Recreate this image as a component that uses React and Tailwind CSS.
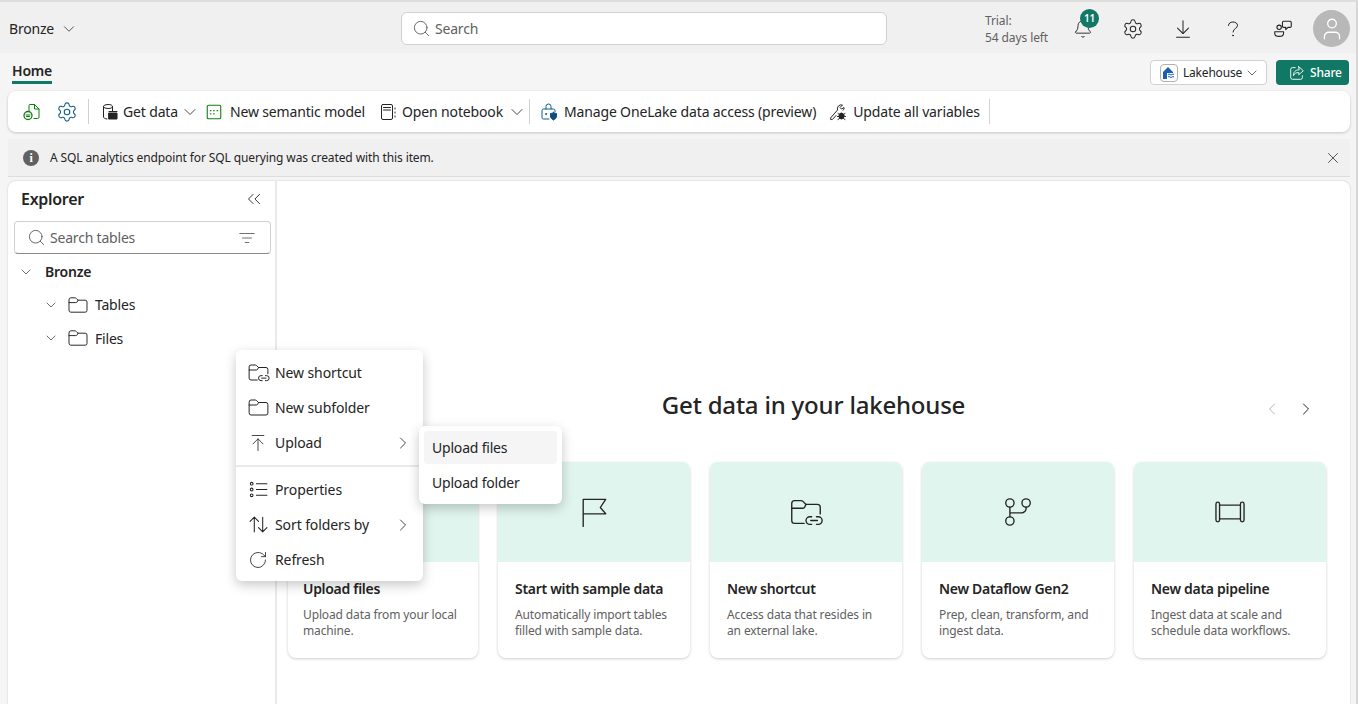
import { Search, ChevronDown, ChevronRight, ChevronLeft, ChevronsLeft, Bell, ArrowDownToLine, X, ArrowUpToLine, RotateCw, Settings, User } from 'lucide-react';

const Svg = ({ size = 20, className = '', children }) => (
  <svg width={size} height={size} viewBox="0 0 20 20" fill="none" stroke="currentColor" strokeWidth="1" strokeLinecap="round" strokeLinejoin="round" className={`shrink-0 ${className}`}>
    {children}
  </svg>
);

const FolderIcon = ({ size, className, sw = 0.8 }) => (
  <Svg size={size} className={className}>
    <g strokeWidth={sw}>
      <path d="M2.500 5.500A1.500 1.500 0 0 1 4 4h3.400c.4 0 .8.2 1 .4L10 6h6a1.500 1.500 0 0 1 1.500 1.500v7A1.500 1.500 0 0 1 16 16H4a1.500 1.500 0 0 1-1.500-1.500z" />
      <path d="M2.500 8h5.700c.4 0 .8-.2 1-.4L10 6" />
    </g>
  </Svg>
);

const ShortcutIcon = ({ size, className, sw = 0.8 }) => (
  <Svg size={size} className={className}>
    <g strokeWidth={sw}>
      <path d="M9 16H4a1.500 1.500 0 0 1-1.500-1.500v-9A1.500 1.500 0 0 1 4 4h3.400c.4 0 .8.2 1 .4L10 6h6a1.500 1.500 0 0 1 1.500 1.500V11" />
      <path d="M2.500 8h5.700c.4 0 .8-.2 1-.4L10 6" />
      <path d="M13 12.500h-1a2 2 0 0 0 0 4h1M15.500 12.500h1a2 2 0 0 1 0 4h-1M12.500 14.500h3.500" />
    </g>
  </Svg>
);

const LakehouseIcon = () => (
  <span className="flex h-[18px] w-[18px] shrink-0 items-center justify-center rounded-sm border border-[#b0b0b0] bg-white">
    <svg width="14" height="14" viewBox="0 0 14 14">
      <path d="M1 13V6l5-5 5 5v1H5v6z" fill="#1a5fb4" />
      <path d="M6 8.500q1-1 2 0t2 0 2 0M6 11q1-1 2 0t2 0 2 0" fill="none" stroke="#1a5fb4" strokeWidth="1" />
    </svg>
  </span>
);

function TopBar() {
  return (
    <header className="box-border flex h-[51px] items-center bg-[#f0f0f0] pt-[2px] text-[#242424]">
      <div className="flex w-[401px] items-center pl-[9px] text-[14px]">
        Bronze
        <ChevronDown size={18} strokeWidth={1} className="ml-[6px]" />
      </div>
      <div className="flex h-[33px] w-[486px] items-center rounded-md border border-[#d1d1d1] bg-white pl-[10px] text-[14px] text-[#616161]">
        <Search size={19} strokeWidth={1.2} className="mr-[4px]" />
        Search
      </div>
      <div className="ml-[98px] w-[83px] text-[12px] leading-[17px] tracking-[-0.1px] text-[#616161]">
        <div>Trial:</div>
        <div>54 days left</div>
      </div>
      <div className="relative ml-[5px] flex w-[20px] justify-center">
        <Bell size={20} strokeWidth={1.1} />
        <span className="absolute -top-[10px] left-[7px] flex h-[19px] w-[19px] items-center justify-center rounded-full bg-[#117865] text-[10px] font-semibold text-white">11</span>
      </div>
      <Settings size={22} strokeWidth={1.1} className="ml-[29px]" />
      <ArrowDownToLine size={22} strokeWidth={1.1} className="ml-[28px]" />
      <Svg size={20} className="ml-[29px]">
        <path d="M5.500 6.500C5.500 4.200 7.500 3 10 3s4.500 1.300 4.500 3.500c0 3-4.500 3-4.500 6.500" />
        <circle cx="10" cy="16.500" r=".5" />
      </Svg>
      <Svg size={22} className="ml-[29px]">
        <circle cx="6.500" cy="8.500" r="2" />
        <path d="M2.500 12.500h8v1.500c0 1.600-1.800 2.700-4 2.700s-4-1.100-4-2.700z" />
        <path d="M10.500 3h6a1 1 0 0 1 1 1v3.500a1 1 0 0 1-1 1h-2L12.500 10.500V8.500h-2a1 1 0 0 1-1-1V4a1 1 0 0 1 1-1z" />
      </Svg>
      <span className="ml-[19px] flex h-[37px] w-[37px] items-center justify-center rounded-full bg-[#b8b8b8] text-white">
        <User size={26} strokeWidth={1.2} />
      </span>
    </header>
  );
}

function TabRow() {
  return (
    <div className="flex h-[38px] items-start">
      <div className="ml-[12px] mt-[9px] border-b-[3px] border-[#117865] pb-[1px] text-[14px] font-semibold leading-[18px] text-[#242424]">Home</div>
      <div className="ml-auto mr-[7px] mt-[7px] flex items-center gap-[9px]">
        <div className="flex h-[25px] w-[117px] items-center rounded border border-[#d1d1d1] bg-white pl-[9px] text-[12px] text-[#242424]">
          <LakehouseIcon />
          <span className="ml-[5px]">Lakehouse</span>
          <ChevronDown size={16} strokeWidth={1} className="ml-[2px]" />
        </div>
        <div className="flex h-[25px] w-[73px] items-center rounded bg-[#117865] pl-[12px] text-[12px] font-medium text-white">
          <Svg size={18}>
            <path d="M8 4H5a2 2 0 0 0-2 2v9a2 2 0 0 0 2 2h9a2 2 0 0 0 2-2v-2" />
            <path d="M12 3l5 4.500-5 4.500V9.500c-3 0-5 1-6 3.500 0-4 2-6.500 6-6.500z" />
          </Svg>
          <span className="ml-[4px]">Share</span>
        </div>
      </div>
    </div>
  );
}

function Divider({ className = '' }) {
  return <span className={`h-[25px] w-px shrink-0 bg-[#d1d1d1] ${className}`} />;
}

function Toolbar() {
  return (
    <div className="ml-[8px] mr-[6px] flex h-[41px] items-center rounded-lg bg-white pl-[14px] text-[14px] tracking-[-0.15px] text-[#242424] shadow-[0_1px_3px_rgba(0,0,0,0.2)]">
      <Svg size={20} className="text-[#107c10]">
        <path d="M7 9V3.500A1 1 0 0 1 8 2.500h4.500L17 7v8a1.500 1.500 0 0 1-1.500 1.500H12" />
        <path d="M12.500 2.500V7H17" />
        <circle cx="6" cy="13.500" r="4" strokeWidth="1.300" />
        <path d="M4 13h4M4.500 14.500h3" strokeWidth="1" />
      </Svg>
      <Settings size={22} strokeWidth={1.2} className="ml-[14px] text-[#0f5c8f]" />
      <Divider className="ml-[10px]" />
      <Svg size={20} className="ml-[11px]">
        <ellipse cx="8" cy="4.500" rx="4.500" ry="2" />
        <path d="M3.500 4.500V15c0 1 1.500 1.800 3.500 2M12.500 4.500V9" />
        <rect x="9" y="11" width="8" height="6" fill="currentColor" />
        <path d="M9 9.500h8" />
      </Svg>
      <span className="ml-[3px]">Get data</span>
      <ChevronDown size={20} strokeWidth={1} className="ml-[2px]" />
      <Svg size={18} className="ml-[5px] text-[#107c10]">
        <rect x="2.500" y="2.500" width="15" height="15" rx="1.500" strokeWidth="1.200" />
        <path d="M6 8.500h.5M9.700 8.500h.5M13.500 8.500h.5M6 12h.5M9.700 12h.5" strokeWidth="1.500" />
      </Svg>
      <span className="ml-[7px]">New semantic model</span>
      <Svg size={20} className="ml-[13px]">
        <rect x="3.500" y="2.500" width="11" height="15" rx="1.500" />
        <path d="M5.500 5.500h7M5.500 8h7M17 6v1M17 10v1M17 14v1" />
      </Svg>
      <span className="ml-[4px]">Open notebook</span>
      <ChevronDown size={20} strokeWidth={1} className="ml-[4px]" />
      <Divider className="ml-[2px]" />
      <Svg size={20} className="ml-[9px] text-[#0f5c8f]">
        <path d="M7 7V4.500a2.500 2.500 0 0 1 5 0V7" />
        <path d="M10 17H4.500A1.500 1.500 0 0 1 3 15.500v-7A1.500 1.500 0 0 1 4.500 7h10A1.500 1.500 0 0 1 16 8.500V10" />
        <circle cx="7" cy="12" r=".6" />
        <path d="M14.500 10.500c1 .8 2 1 3 1v2.500c0 2-1.300 3.200-3 4-1.700-.8-3-2-3-4v-2.500c1 0 2-.2 3-1z" fill="#0f4c81" stroke="#0f4c81" />
      </Svg>
      <span className="ml-[5px]">Manage OneLake data access (preview)</span>
      <Svg size={20} className="ml-[12px]">
        <path d="M3 17.500l-.5-1.500 7-8a4 4 0 0 1 5-5l-2.500 2.500 1.500 1.500 2.500-1.500c.3 1-.2 2-.8 2.700" />
        <path d="M3 17.500c1 .3 1.500 0 2-.6l3-3.400" />
        <ellipse cx="13.500" cy="14" rx="2.500" ry="3" fill="currentColor" />
        <path d="M10 11.500l1.500 1M17 11.500l-1.500 1M9.500 14.500h1.500M17.500 14.500H16M10 17.500l1.500-1M17 17.500l-1.500-1" />
      </Svg>
      <span className="ml-[5px]">Update all variables</span>
      <Divider className="ml-[9px]" />
    </div>
  );
}

function Banner() {
  return (
    <div className="ml-[8px] mr-[6px] mt-[7px] flex h-[38px] items-center border-b border-[#dcdcdc] bg-[#f0f0f0] pl-[15px] pr-[8px] text-[12px] tracking-[-0.11px] text-[#242424]">
      <span className="flex h-[16px] w-[16px] items-center justify-center rounded-full bg-[#616161] font-['Liberation_Serif',serif] text-[12px] font-bold text-white">i</span>
      <span className="ml-[11px]">A SQL analytics endpoint for SQL querying was created with this item.</span>
      <X size={18} strokeWidth={1} className="ml-auto" />
    </div>
  );
}

function TreeRow({ label }) {
  return (
    <div className="flex h-[33.5px] items-center pl-[30px] text-[14px]">
      <ChevronDown size={16} strokeWidth={1} className="mr-[7px]" />
      <FolderIcon size={24} className="mr-[5px]" />
      {label}
    </div>
  );
}

function Explorer() {
  return (
    <aside className="w-[269px] shrink-0 border-r-2 border-[#eaeaea] pl-[5px] pr-[5px] text-[#242424]">
      <div className="flex h-[40px] items-center justify-between pb-[4px] pl-[8px] pr-[5px]">
        <span className="pb-[1px] text-[16px] font-semibold leading-[24px] tracking-[-0.3px]">Explorer</span>
        <ChevronsLeft size={22} strokeWidth={1} />
      </div>
      <div className="ml-px flex h-[33px] w-[257px] items-center rounded border border-[#d1d1d1] border-b-[#8a8a8a] pl-[12px] pr-[14px] text-[14px] text-[#616161]">
        <Search size={19} strokeWidth={1.2} className="mr-[4px]" />
        Search tables
        <Svg size={18} className="ml-auto">
          <path d="M2 5h16M5 10h10M8 15h4" />
        </Svg>
      </div>
      <div className="mt-[1px] flex h-[33px] items-center pl-[5px] text-[14px] font-semibold">
        <ChevronDown size={16} strokeWidth={1} className="mr-[11px]" />
        Bronze
      </div>
      <TreeRow label="Tables" />
      <TreeRow label="Files" />
    </aside>
  );
}

const cards = [
  { title: 'Upload files', desc: ['Upload data from your local', 'machine.'], icon: null, inset: 'pl-[15px]' },
  {
    title: 'Start with sample data',
    desc: ['Automatically import tables', 'filled with sample data.'],
    inset: 'pl-[17px]',
    icon: (
      <Svg size={36} className="text-[#242424]">
        <path d="M4 18V3h12.500L13.500 7.500l3 3.500H4" strokeWidth=".75" />
      </Svg>
    ),
  },
  { title: 'New shortcut', desc: ['Access data that resides in', 'an external lake.'], inset: 'pl-[17px]', icon: <ShortcutIcon size={38} sw={0.72} className="text-[#242424]" /> },
  {
    title: 'New Dataflow Gen2',
    desc: ['Prep, clean, transform, and', 'ingest data.'],
    inset: 'pl-[17px]',
    icon: (
      <Svg size={36} className="text-[#242424]">
        <g strokeWidth=".75">
          <circle cx="5.500" cy="5" r="2.300" />
          <circle cx="14.500" cy="5" r="2.300" />
          <circle cx="5.500" cy="15" r="2.300" />
          <path d="M5.500 7.300v5.400M14.500 7.300v.7a2.500 2.500 0 0 1-2.500 2.500H5.500" />
        </g>
      </Svg>
    ),
  },
  {
    title: 'New data pipeline',
    desc: ['Ingest data at scale and', 'schedule data workflows.'],
    inset: 'pl-[17px]',
    icon: (
      <Svg size={36} className="text-[#242424]">
        <g strokeWidth=".75">
          <rect x="2.200" y="4.500" width="2" height="11" rx="1" />
          <rect x="15.800" y="4.500" width="2" height="11" rx="1" />
          <path d="M4.200 6.200h11.600M4.200 13.800h11.600" />
        </g>
      </Svg>
    ),
  },
];

function Card({ card }) {
  return (
    <div className="flex h-[196px] flex-col overflow-hidden rounded-lg bg-white shadow-[0_1px_3px_rgba(0,0,0,0.2)]">
      <div className="flex h-[100px] items-center justify-center bg-[#e0f5ed]">{card.icon}</div>
      <div className={`${card.inset} pt-[18px]`}>
        <div className="text-[14px] font-semibold leading-[18px] tracking-[-0.3px] text-[#242424]">{card.title}</div>
        <div className="mt-[9px] text-[12px] leading-[16px] tracking-[-0.13px] text-[#616161]">
          {card.desc.map((line) => (
            <div key={line}>{line}</div>
          ))}
        </div>
      </div>
    </div>
  );
}

function Main() {
  return (
    <main className="min-w-0 flex-1 pl-[11px] pr-[24px] pt-[206px]">
      <div className="-ml-[11px] -mr-[24px] grid h-[36px] grid-cols-[1fr_auto_1fr] items-center">
        <span />
        <h1 className="text-[24px] font-medium leading-[36px] text-[#242424]">Get data in your lakehouse</h1>
        <div className="mt-[8px] flex justify-end gap-[14px] pr-[34px]">
          <ChevronLeft size={20} strokeWidth={1} className="text-[#a8a8a8]" />
          <ChevronRight size={20} strokeWidth={1.2} className="text-[#242424]" />
        </div>
      </div>
      <div className="mt-[39px] grid grid-cols-[190px_repeat(4,192px)] gap-[20px]">
        {cards.map((card) => (
          <Card key={card.title} card={card} />
        ))}
      </div>
    </main>
  );
}

function MenuItem({ icon, label, arrow }) {
  return (
    <div className="flex h-[35px] items-center pl-[12px] pr-[10px] text-[14px] tracking-[-0.1px] text-[#242424]">
      <span className="mr-[7px] flex w-[20px] justify-center">{icon}</span>
      {label}
      {arrow && <ChevronRight size={20} strokeWidth={1} className="ml-auto" />}
    </div>
  );
}

function ContextMenu() {
  return (
    <div className="absolute left-[236px] top-[348px] w-[187px] rounded-md bg-white pb-[4px] pt-[5px] shadow-[0_4px_12px_rgba(0,0,0,0.22)]">
      <MenuItem label="New shortcut" icon={<ShortcutIcon size={25} />} />
      <MenuItem label="New subfolder" icon={<FolderIcon size={25} />} />
      <MenuItem label="Upload" arrow icon={<ArrowUpToLine size={22} strokeWidth={1} />} />
      <div className="mb-[5px] mt-[5px] h-[2px] bg-[#eaeaea]" />
      <MenuItem
        label="Properties"
        icon={
          <Svg size={21}>
            <circle cx="3.500" cy="4.500" r="1.300" />
            <circle cx="3.500" cy="10" r="1.300" />
            <circle cx="3.500" cy="15.500" r="1.300" />
            <path d="M8 4.500h10M8 10h10M8 15.500h10" />
          </Svg>
        }
      />
      <MenuItem
        label="Sort folders by"
        arrow
        icon={
          <Svg size={21}>
            <path d="M6 17V3M2 7l4-4 4 4M14 3v14M10 13l4 4 4-4" />
          </Svg>
        }
      />
      <MenuItem label="Refresh" icon={<RotateCw size={20} strokeWidth={1} />} />
    </div>
  );
}

function SubMenu() {
  return (
    <div className="absolute left-[419px] top-[424px] w-[143px] rounded-md bg-white p-[5px] text-[14px] text-[#242424] shadow-[0_4px_12px_rgba(0,0,0,0.22)]">
      <div className="flex h-[33px] items-center rounded bg-[#f5f5f5] pl-[8px]">Upload files</div>
      <div className="mt-[2px] flex h-[33px] items-center pl-[8px]">Upload folder</div>
    </div>
  );
}

export default function App() {
  return (
    <div className="relative h-[704px] w-[1358px] overflow-hidden border-r-2 border-t-2 border-r-[#d6d6d6] border-t-[#dedede] bg-[#f5f5f5] font-['Noto_Sans',sans-serif] tracking-[-0.2px]">
      <TopBar />
      <TabRow />
      <Toolbar />
      <Banner />
      <div className="ml-[8px] mr-[6px] mt-[4px] flex h-[530px] rounded-t-lg bg-white shadow-[0_0_2px_rgba(0,0,0,0.2)]">
        <Explorer />
        <Main />
      </div>
      <ContextMenu />
      <SubMenu />
    </div>
  );
}
